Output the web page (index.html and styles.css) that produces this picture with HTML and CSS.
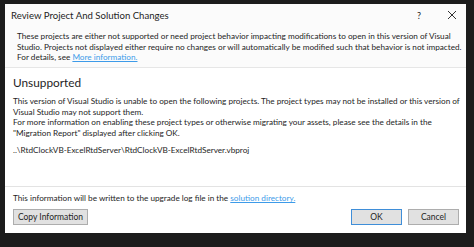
FILE: index.html
```html
<!DOCTYPE html>
<html lang="en">
<head>
    <meta charset="UTF-8">
    <title>Review Project And Solution Changes</title>
    <link rel="stylesheet" href="styles.css">
</head>
<body>
    <div class="dialog">
        <div class="top">
            <div class="titlebar">
                <span class="title">Review Project And Solution Changes</span>
                <span class="help">?</span>
                <span class="close">
                    <svg width="10" height="10" viewBox="0 0 10 10"><path d="M1 1L9 9M9 1L1 9" stroke="#333" stroke-width="1"/></svg>
                </span>
            </div>
            <p class="intro">These projects are either not supported or need project behavior impacting modifications to open in this version of Visual<br>
            Studio. Projects not displayed either require no changes or will automatically be modified such that behavior is not impacted.<br>
            For details, see <a href="#">More information.</a></p>
        </div>

        <div class="content">
            <h2 class="section">Unsupported</h2>
            <p>This version of Visual Studio is unable to open the following projects. The project types may not be installed or this version of<br>
            Visual Studio may not support them.<br>
            For more information on enabling these project types or otherwise migrating your assets, please see the details in the<br>
            "Migration Report" displayed after clicking OK.</p>
            <p class="path">..\RtdClockVB-ExcelRtdServer\RtdClockVB-ExcelRtdServer.vbproj</p>
        </div>

        <div class="footer">
            <p>This information will be written to the upgrade log file in the <a href="#">solution directory.</a></p>
            <div class="buttons">
                <button class="btn btn-wide">Copy Information</button>
                <span class="spacer"></span>
                <button class="btn btn-default">OK</button>
                <button class="btn">Cancel</button>
            </div>
        </div>
    </div>
</body>
</html>
```

FILE: styles.css
```css
body {
    margin: 0;
    padding: 4px 8px 14px 5px;
    background-color: #1c1c1c;
    font-family: 'Lato', sans-serif;
    font-size: 8.2px;
    color: #1e1e1e;
}
.dialog {
    width: 461px;
    height: 229px;
    background-color: #ffffff;
    display: flex;
    flex-direction: column;
    box-sizing: border-box;
}
.top {
    background-color: #fbfbfb;
    border-bottom: 1px solid #e6e6e6;
    height: 64px;
    box-sizing: border-box;
}
.titlebar {
    display: flex;
    align-items: center;
    height: 22px;
    padding-left: 6px;
}
.title {
    flex: 1;
    font-size: 9.6px;
}
.help {
    width: 30px;
    font-size: 9px;
}
.close {
    width: 14px;
    padding-right: 5px;
    display: flex;
}
p {
    margin: 0;
    line-height: 10.7px;
    white-space: nowrap;
}
.intro {
    padding: 5px 8px 0 12px;
}
a {
    color: #3d9be9;
}
.content {
    flex: 1;
    padding: 6px 8px 0 8px;
}
.section {
    margin: 0 0 5px 0;
    font-size: 11.8px;
    font-weight: normal;
    line-height: 17px;
}
.path {
    margin-top: 6px;
}
.footer {
    border-top: 1px solid #e3e3e3;
    padding: 6px 7px 8px 8px;
}
.buttons {
    display: flex;
    gap: 6px;
    margin-top: 5px;
}
.spacer {
    flex: 1;
}
.btn {
    font-family: 'Lato', sans-serif;
    font-size: 8.5px;
    color: #1e1e1e;
    background-color: #e1e1e1;
    border: 1px solid #adadad;
    height: 16px;
    padding: 0;
    width: 51px;
}
.btn-wide {
    width: 75px;
}
.btn-default {
    border-color: #3f8ed8;
}
```
